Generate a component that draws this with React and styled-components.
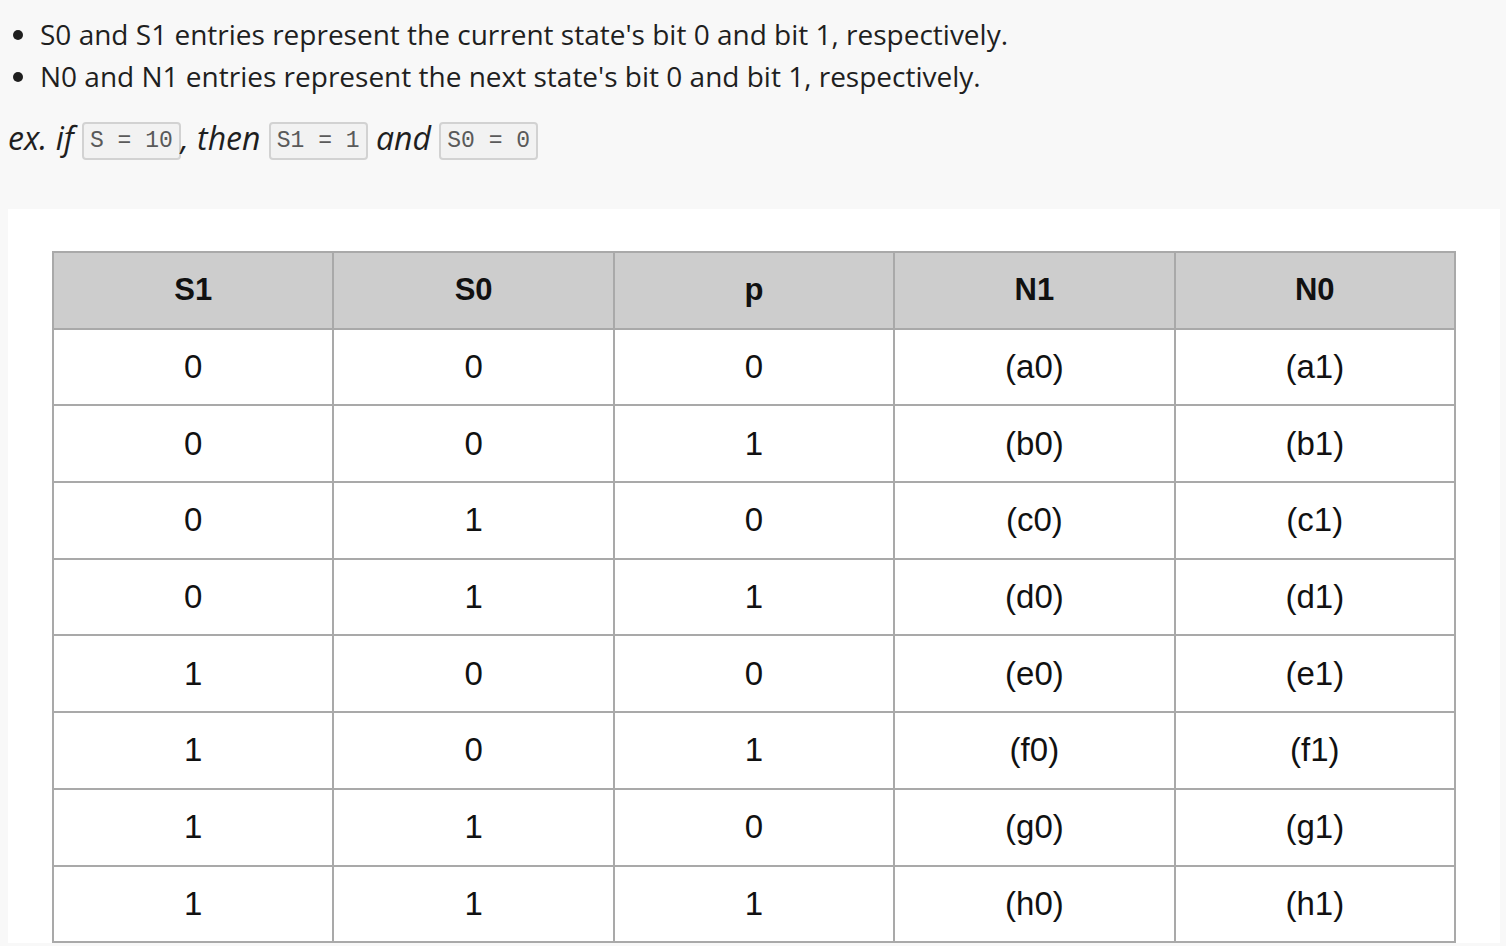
import React from 'react';
import styled, { createGlobalStyle } from 'styled-components';

const GlobalStyle = createGlobalStyle`
  html, body {
    margin: 0;
    padding: 0;
    background: #f8f8f8;
  }
  body {
    font-family: "Open Sans", "Liberation Sans", sans-serif;
    color: #1f1f1f;
  }
`;

const Page = styled.div`
  padding: 13px 6px 0 8px;
`;

const Bullets = styled.ul`
  list-style: none;
  margin: 0;
  padding: 0;
`;

const Bullet = styled.li`
  position: relative;
  padding-left: 32px;
  font-size: 28px;
  line-height: 42px;

  &::before {
    content: '';
    position: absolute;
    left: 5px;
    top: 17px;
    width: 10px;
    height: 10px;
    border-radius: 50%;
    background: #1f1f1f;
  }
`;

const Example = styled.p`
  margin: 15px 0 0;
  font-style: italic;
  font-size: 32px;
  line-height: 52px;
`;

const Code = styled.code`
  display: inline-block;
  font-style: normal;
  font-family: "Liberation Mono", "Courier New", monospace;
  font-size: 23px;
  line-height: 34px;
  color: #5a5a5a;
  background: #f2f2f2;
  border: 2px solid #d2d2d2;
  border-radius: 4px;
  padding: 0 6px;
  vertical-align: 3px;
`;

const Panel = styled.div`
  margin-top: 45px;
  background: #fff;
  padding: 42px 44px 0;
`;

const Table = styled.table`
  width: 1404px;
  border-collapse: collapse;
  table-layout: fixed;
  font-family: "Liberation Sans", Arial, sans-serif;
  color: #111;
`;

const Th = styled.th`
  height: 74.7px;
  padding: 0;
  background: #cdcdcd;
  border: 2px solid #a9a9a9;
  font-size: 31px;
  font-weight: bold;
  text-align: center;
`;

const Td = styled.td`
  height: 74.7px;
  padding: 0;
  border: 2px solid #a9a9a9;
  font-size: 33px;
  text-align: center;
`;

const headers = ['S1', 'S0', 'p', 'N1', 'N0'];
const letters = ['a', 'b', 'c', 'd', 'e', 'f', 'g', 'h'];

export default function App() {
  return (
    <>
      <GlobalStyle />
      <Page>
        <Bullets>
          <Bullet>S0 and S1 entries represent the current state's bit 0 and bit 1, respectively.</Bullet>
          <Bullet>N0 and N1 entries represent the next state's bit 0 and bit 1, respectively.</Bullet>
        </Bullets>
        <Example>
          ex. if <Code>S = 10</Code>, then <Code>S1 = 1</Code> and <Code>S0 = 0</Code>
        </Example>
        <Panel>
          <Table>
            <thead>
              <tr>
                {headers.map((h) => (
                  <Th key={h}>{h}</Th>
                ))}
              </tr>
            </thead>
            <tbody>
              {letters.map((l, i) => (
                <tr key={l}>
                  <Td>{(i >> 2) & 1}</Td>
                  <Td>{(i >> 1) & 1}</Td>
                  <Td>{i & 1}</Td>
                  <Td>({l}0)</Td>
                  <Td>({l}1)</Td>
                </tr>
              ))}
            </tbody>
          </Table>
        </Panel>
      </Page>
    </>
  );
}
